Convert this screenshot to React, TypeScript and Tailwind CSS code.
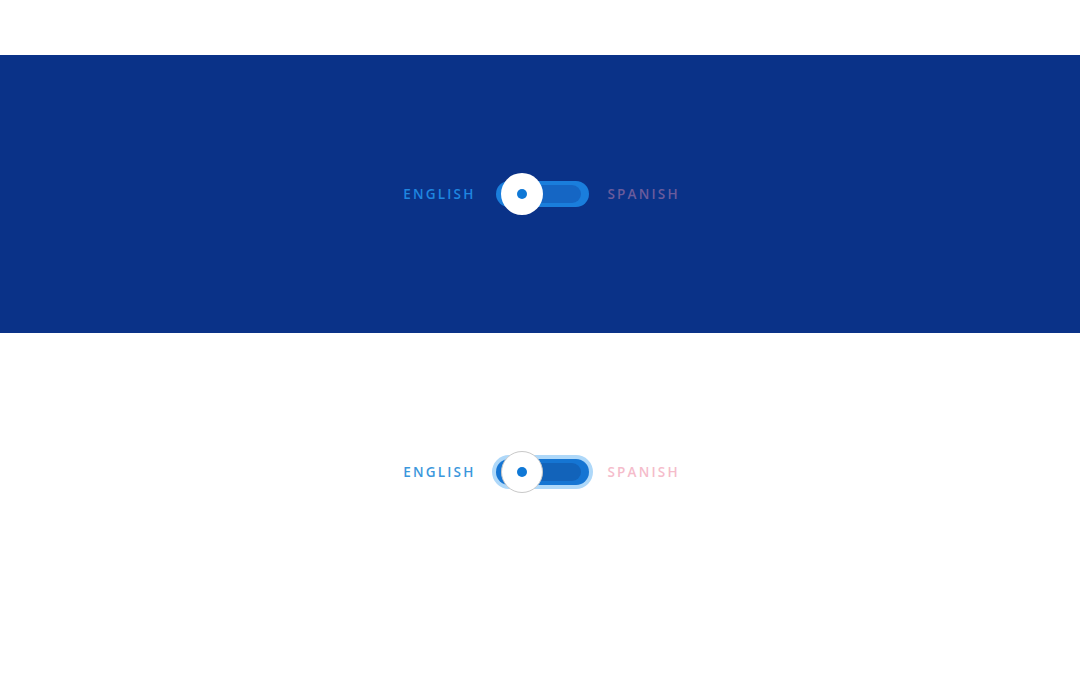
import React from "react";

function LangToggle({ light }: { light?: boolean }) {
  return (
    <div className="flex items-center justify-center pl-[3px] font-['Open_Sans',sans-serif] text-[13.5px] font-semibold tracking-[2.2px]">
      <span className={light ? "text-[#3b97dc]" : "text-[#1f86e0]"}>ENGLISH</span>
      <div
        className={
          "relative ml-[20px] mr-[19px] h-[26px] w-[93px] rounded-full " +
          (light ? "bg-[#1575d3] ring-[4px] ring-[#aed8f9]" : "bg-[#1a7edc]")
        }
      >
        <div
          className={
            "absolute right-[8px] top-[4px] h-[18px] w-[48px] rounded-full " +
            (light ? "bg-[#1263ba]" : "bg-[#1566c4]")
          }
        />
        <div
          className={
            "absolute left-[5px] top-[-8px] flex h-[42px] w-[42px] items-center justify-center rounded-full bg-white " +
            (light ? "border border-[#c9c9c9]" : "")
          }
        >
          <div className="h-[10px] w-[10px] rounded-full bg-[#0f78d6]" />
        </div>
      </div>
      <span className={light ? "text-[#f5bccb]" : "text-[#6a5c9c]"}>SPANISH</span>
    </div>
  );
}

export default function App() {
  return (
    <div className="min-h-[675px] w-full bg-white">
      <div className="h-[55px]" />
      <div className="flex h-[278px] items-center justify-center bg-[#0a3288]">
        <LangToggle />
      </div>
      <div className="flex h-[278px] items-center justify-center bg-white">
        <LangToggle light />
      </div>
    </div>
  );
}
